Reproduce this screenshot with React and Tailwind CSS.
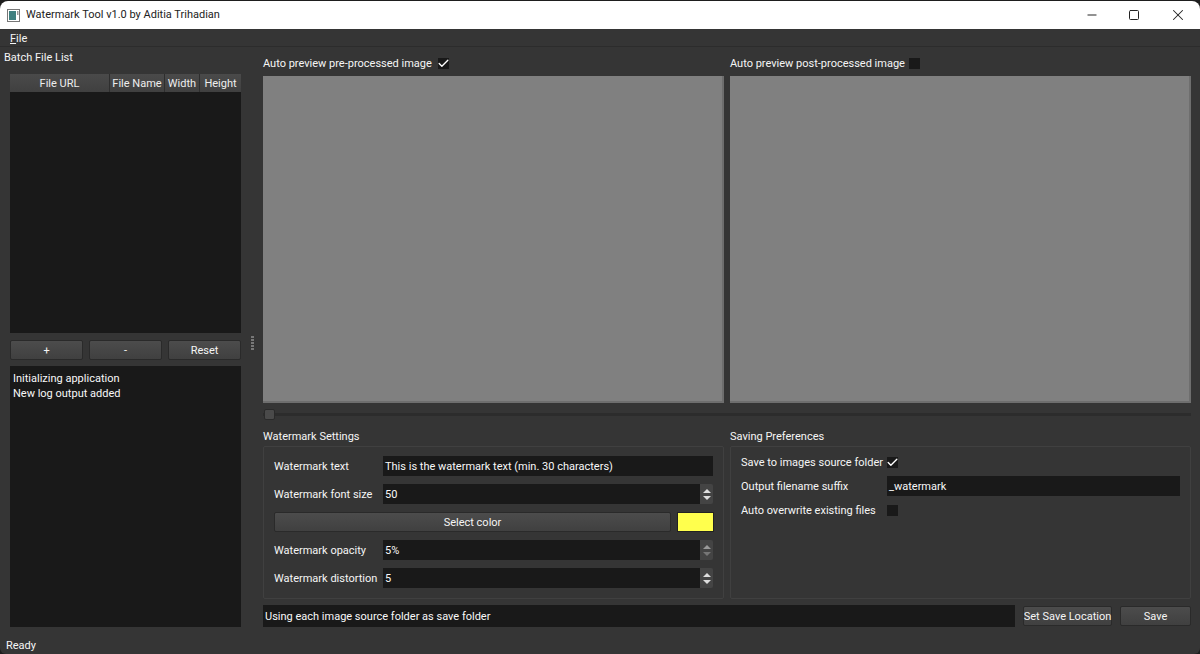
import React from "react";
import { Minus, Square, X, Check } from "lucide-react";

const font = "font-['Roboto','Noto_Sans',sans-serif]";

const Btn = ({ children, className = "" }) => (
  <button className={`h-[20px] flex items-center justify-center whitespace-nowrap rounded-[2px] border border-[#2a2a2a] bg-gradient-to-b from-[#4c4c4c] to-[#404040] text-[#f5f5f5] text-[11px] leading-none ${className}`}>
    {children}
  </button>
);

const Field = ({ children, className = "" }) => (
  <div className={`h-[20px] flex items-center bg-[#191919] text-[#f8f8f8] text-[11px] px-[2px] pt-[2px] ${className}`}>{children}</div>
);

const Box = ({ checked }) => (
  <div className="w-[11px] h-[11px] flex items-center justify-center bg-[#191919]">
    {checked && <Check size={13} strokeWidth={2.5} className="text-white shrink-0" />}
  </div>
);

const Spin = ({ value, dim }) => (
  <div className="flex h-[20px] flex-1">
    <Field className="flex-1 pl-[2px]">{value}</Field>
    <div className="w-[13px] flex flex-col items-center justify-center gap-[3px] bg-[#444] rounded-r-[2px]">
      <div className={`w-0 h-0 border-x-[4px] border-x-transparent border-b-[4px] ${dim ? "border-b-[#999]" : "border-b-[#ddd]"}`} />
      <div className={`w-0 h-0 border-x-[4px] border-x-transparent border-t-[4px] ${dim ? "border-t-[#777]" : "border-t-[#ddd]"}`} />
    </div>
  </div>
);

const SettingRow = ({ label, children }) => (
  <div className="flex items-center h-[20px]">
    <span className="w-[109px] pt-[2px] whitespace-nowrap text-[11px] text-[#f5f5f5]">{label}</span>
    {children}
  </div>
);

export default function App() {
  return (
    <div className={`${font} w-[1200px] h-[654px] overflow-hidden bg-[#1e1e1e] flex flex-col`}>
      <div className="h-[28px] shrink-0 bg-white rounded-t-[8px] flex items-center pl-[7px] text-[#222] text-[11px] mt-[1px]">
        <svg width="13" height="13" viewBox="0 0 13 13" className="mr-[6px]">
          <rect x="0.5" y="0.5" width="12" height="12" fill="#fff" stroke="#777" />
          <rect x="2" y="2" width="7" height="9" fill="#3f7f7f" />
          <rect x="10" y="2" width="1.5" height="4" fill="#999" />
        </svg>
        <span>Watermark Tool v1.0 by Aditia Trihadian</span>
        <div className="ml-auto flex items-center text-[#222]">
          <div className="w-[43px] flex justify-center"><Minus size={14} strokeWidth={1.7} /></div>
          <div className="w-[42px] flex justify-center"><Square size={12} strokeWidth={2} /></div>
          <div className="w-[45px] flex justify-center"><X size={18} strokeWidth={1.4} /></div>
        </div>
      </div>

      <div className="flex-1 flex flex-col bg-[#353535] rounded-b-[6px]">
        <div className="h-[18px] shrink-0 border-b border-[#2c2c2c] pl-[10px] text-[11px] leading-[19px] text-[#f5f5f5]">
          <span className="underline">F</span>ile
        </div>

        <div className="flex flex-1 min-h-0">
          <aside className="w-[241px] shrink-0 flex flex-col">
            <div className="pl-[4px] h-[27px] pt-[3px] text-[11px] text-[#f5f5f5] leading-[16px]">Batch File List</div>
            <div className="ml-[10px] h-[259px] flex flex-col bg-[#191919]">
              <div className="h-[18px] flex bg-gradient-to-b from-[#4a4a4a] to-[#404040] text-[11px] text-[#eee] leading-[19px] text-center">
                <div className="w-[100px] border-r border-[#2e2e2e]">File URL</div>
                <div className="w-[55px] border-r border-[#2e2e2e]">File Name</div>
                <div className="w-[35px] border-r border-[#2e2e2e]">Width</div>
                <div className="flex-1">Height</div>
              </div>
            </div>
            <div className="ml-[10px] mt-[7px] flex justify-between">
              <Btn className="w-[73px]">+</Btn>
              <Btn className="w-[73px]">-</Btn>
              <Btn className="w-[73px]">Reset</Btn>
            </div>
            <div className="ml-[10px] mt-[6px] h-[261px] bg-[#191919] px-[3px] py-[5px] text-[11px] leading-[15px] text-[#f8f8f8]">
              <p>Initializing application</p>
              <p>New log output added</p>
            </div>
            <div className="pl-[6px] mt-[11px] text-[11px] leading-[16px] text-[#f5f5f5]">Ready</div>
          </aside>

          <div className="w-[22px] shrink-0 flex flex-col items-center pt-[289px] gap-[1px]">
            {[0, 1, 2, 3, 4].map((i) => (
              <div key={i} className="w-[3px] h-[2px] bg-[#777]" />
            ))}
          </div>

          <main className="flex-1 flex flex-col pr-[9px]">
            <div className="flex gap-[6px] h-[29px]">
              <div className="flex-1 flex items-center gap-[6px] pt-[4px] text-[11px] text-[#f5f5f5]">
                <span className="pt-[1px]">Auto preview pre-processed image</span> <Box checked />
              </div>
              <div className="flex-1 flex items-center gap-[4px] pt-[4px] text-[11px] text-[#f5f5f5]">
                <span className="pt-[1px]">Auto preview post-processed image</span> <Box />
              </div>
            </div>
            <div className="flex gap-[6px] h-[327px]">
              <div className="flex-1 bg-[#808080] border-r-2 border-b-2 border-[#6e6e6e]" />
              <div className="flex-1 bg-[#808080] border-r-2 border-b-2 border-[#6e6e6e]" />
            </div>

            <div className="relative h-[23px] flex items-center">
              <div className="w-full h-[3px] bg-[#2c2c2c]" />
              <div className="absolute left-[1px] top-[6px] w-[11px] h-[11px] rounded-[2px] bg-[#4a4a4a] border border-[#2a2a2a]" />
            </div>

            <div className="flex gap-[6px] h-[173px]">
              <section className="flex-1 flex flex-col">
                <h2 className="h-[20px] text-[11px] font-normal leading-[22px] text-[#f5f5f5]">Watermark Settings</h2>
                <div className="flex-1 border border-[#404040] rounded-[2px] pl-[10px] pr-[10px] pt-[9px] flex flex-col gap-[8px]">
                  <SettingRow label="Watermark text"><Field className="flex-1">This is the watermark text (min. 30 characters)</Field></SettingRow>
                  <SettingRow label="Watermark font size"><Spin value="50" /></SettingRow>
                  <div className="flex gap-[6px] h-[20px] -mr-[1px]">
                    <Btn className="flex-1">Select color</Btn>
                    <div className="w-[37px] bg-[#ffff4d] border border-[#222]" />
                  </div>
                  <SettingRow label="Watermark opacity"><Spin value="5%" dim /></SettingRow>
                  <SettingRow label="Watermark distortion"><Spin value="5" /></SettingRow>
                </div>
              </section>
              <section className="flex-1 flex flex-col">
                <h2 className="h-[20px] text-[11px] font-normal leading-[22px] text-[#f5f5f5]">Saving Preferences</h2>
                <div className="flex-1 border border-[#404040] rounded-[2px] px-[10px] pt-[5px] flex flex-col gap-[4px]">
                  <div className="flex items-center h-[20px]">
                    <span className="w-[146px] pt-[2px] whitespace-nowrap text-[11px] text-[#f5f5f5]">Save to images source folder</span>
                    <Box checked />
                  </div>
                  <div className="flex items-center h-[20px]">
                    <span className="w-[146px] pt-[2px] whitespace-nowrap text-[11px] text-[#f5f5f5]">Output filename suffix</span>
                    <Field className="flex-1">_watermark</Field>
                  </div>
                  <div className="flex items-center h-[20px]">
                    <span className="w-[146px] pt-[2px] whitespace-nowrap text-[11px] text-[#f5f5f5]">Auto overwrite existing files</span>
                    <Box />
                  </div>
                </div>
              </section>
            </div>

            <div className="flex items-center mt-[6px]">
              <Field className="w-[752px] h-[22px]">Using each image source folder as save folder</Field>
              <Btn className="ml-[8px] w-[89px]">Set Save Location</Btn>
              <Btn className="ml-[8px] w-[71px]">Save</Btn>
            </div>
          </main>
        </div>
      </div>
    </div>
  );
}
